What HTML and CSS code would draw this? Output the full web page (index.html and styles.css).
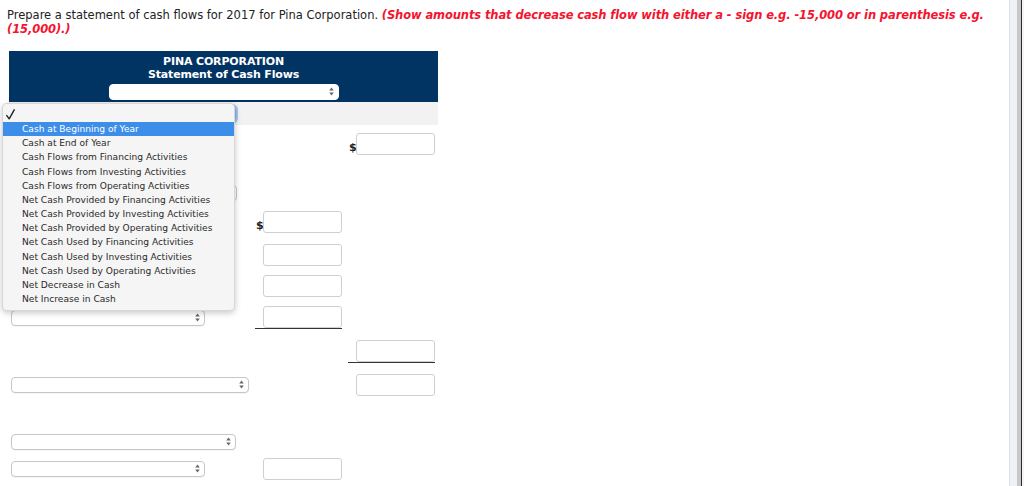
FILE: index.html
```html
<!DOCTYPE html>
<html>
<head>
<meta charset="utf-8">
<title>Pina Corporation</title>
<link rel="stylesheet" href="styles.css">
</head>
<body>
<div class="page">
  <p class="prompt">Prepare a statement of cash flows for 2017 for Pina Corporation. <em class="note">(Show amounts that decrease cash flow with either a - sign e.g. -15,000 or in parenthesis e.g.<br>(15,000).)</em></p>

  <div class="sheet">
    <div class="head">
      <div class="h-title">PINA CORPORATION</div>
      <div class="h-title">Statement of Cash Flows</div>
      <div class="sel sel-head"><span class="arr"><svg width="5" height="9" viewBox="0 0 5 9"><path d="M2.5 0.5L4.8 3.6H0.2Z M2.5 8.5L4.8 5.4H0.2Z" fill="#666"/></svg></span></div>
    </div>

    <div class="row grey">
      <div class="c1"><div class="sel w225 focus"></div></div>
    </div>

    <div class="row t8">
      <div class="c1"></div>
      <div class="c2"></div>
      <div class="c3"><div class="amt"><span class="dol">$</span><span class="inp"></span></div></div>
    </div>

    <div class="row t27">
      <div class="c1"><div class="sel w226"></div></div>
    </div>

    <div class="row t8b">
      <div class="c1"></div>
      <div class="c2"><div class="amt"><span class="dol">$</span><span class="inp"></span></div></div>
    </div>

    <div class="row t11">
      <div class="c1"></div>
      <div class="c2"><div class="amt"><span class="dol"></span><span class="inp"></span></div></div>
    </div>

    <div class="row t9">
      <div class="c1"></div>
      <div class="c2"><div class="amt"><span class="dol"></span><span class="inp"></span></div></div>
    </div>

    <div class="row t9">
      <div class="c1"><div class="sel w194"><span class="arr"><svg width="5" height="9" viewBox="0 0 5 9"><path d="M2.5 0.5L4.8 3.6H0.2Z M2.5 8.5L4.8 5.4H0.2Z" fill="#666"/></svg></span></div></div>
      <div class="c2"><div class="amt ul"><span class="dol"></span><span class="inp"></span></div></div>
    </div>

    <div class="row t11">
      <div class="c1"></div>
      <div class="c2"></div>
      <div class="c3"><div class="amt ul"><span class="dol"></span><span class="inp"></span></div></div>
    </div>

    <div class="row t11">
      <div class="c1"><div class="sel w238"><span class="arr"><svg width="5" height="9" viewBox="0 0 5 9"><path d="M2.5 0.5L4.8 3.6H0.2Z M2.5 8.5L4.8 5.4H0.2Z" fill="#666"/></svg></span></div></div>
      <div class="c2"></div>
      <div class="c3"><div class="amt"><span class="dol"></span><span class="inp"></span></div></div>
    </div>

    <div class="row t35">
      <div class="c1"><div class="sel w225"><span class="arr"><svg width="5" height="9" viewBox="0 0 5 9"><path d="M2.5 0.5L4.8 3.6H0.2Z M2.5 8.5L4.8 5.4H0.2Z" fill="#666"/></svg></span></div></div>
    </div>

    <div class="row t5">
      <div class="c1"><div class="sel w194"><span class="arr"><svg width="5" height="9" viewBox="0 0 5 9"><path d="M2.5 0.5L4.8 3.6H0.2Z M2.5 8.5L4.8 5.4H0.2Z" fill="#666"/></svg></span></div></div>
      <div class="c2"><div class="amt"><span class="dol"></span><span class="inp"></span></div></div>
    </div>

    <ul class="menu">
      <li class="item check"><svg class="tick" width="9" height="11" viewBox="0 0 9 11"><path d="M0.8 6.6L3.2 9.8L8.2 0.8" fill="none" stroke="#222" stroke-width="1.4" stroke-linecap="round" stroke-linejoin="round"/></svg></li>
      <li class="item active">Cash at Beginning of Year</li>
      <li class="item">Cash at End of Year</li>
      <li class="item">Cash Flows from Financing Activities</li>
      <li class="item">Cash Flows from Investing Activities</li>
      <li class="item">Cash Flows from Operating Activities</li>
      <li class="item">Net Cash Provided by Financing Activities</li>
      <li class="item">Net Cash Provided by Investing Activities</li>
      <li class="item">Net Cash Provided by Operating Activities</li>
      <li class="item">Net Cash Used by Financing Activities</li>
      <li class="item">Net Cash Used by Investing Activities</li>
      <li class="item">Net Cash Used by Operating Activities</li>
      <li class="item">Net Decrease in Cash</li>
      <li class="item">Net Increase in Cash</li>
    </ul>
  </div>
</div>
<div class="edge"></div>
</body>
</html>
```

FILE: styles.css
```css
* { box-sizing: border-box; }
html, body { margin: 0; padding: 0; background: #fff; }
body {
  width: 1024px;
  height: 486px;
  overflow: hidden;
  position: relative;
  font-family: "DejaVu Sans", Verdana, sans-serif;
  color: #222;
}
.page { padding: 8px 0 0 7px; }
.prompt {
  margin: 0;
  font-size: 11.5px;
  line-height: 14px;
  color: #222;
  white-space: nowrap;
}
.note { font-weight: bold; font-style: italic; color: #f3142f; letter-spacing: -0.1px; }

.sheet { position: relative; width: 429px; margin: 15px 0 0 2px; }

.head {
  background: #023463;
  color: #fff;
  text-align: center;
  padding: 4px 0 2px;
}
.h-title { font-weight: bold; font-size: 11px; line-height: 13px; letter-spacing: -0.15px; }

.sel {
  position: relative;
  height: 16px;
  background: #fff;
  border: 1px solid #c6c6c6;
  border-radius: 4px;
  box-shadow: 0 1px 1px rgba(0,0,0,0.04);
}
.sel-head { width: 230px; margin: 3px auto 0; border-color: #fff; }
.arr { position: absolute; right: 4px; top: 2px; display: flex; }
.arr svg { display: block; }
.w194 { width: 194px; }
.w225 { width: 225px; }
.w226 { width: 226px; }
.w238 { width: 238px; }
.focus { border-color: #7fb1ea; box-shadow: 0 0 0 2px rgba(110,165,235,0.6); }

.row {
  display: grid;
  grid-template-columns: 237px 99px 93px;
  align-items: center;
  min-height: 22px;
}
.grey { background: #f2f2f2; height: 23px; }
.c1 { padding-left: 2px; }
.c2, .c3 { display: flex; justify-content: flex-end; padding-right: 3px; }

.t5 { margin-top: 5px; }
.t8 { margin-top: 8px; }
.t8b { margin-top: 7px; }
.t9 { margin-top: 9px; }
.t11 { margin-top: 11px; }
.t27 { margin-top: 27px; }
.t35 { margin-top: 35px; }

.amt { display: flex; align-items: flex-end; width: 87px; }
.amt.ul { border-bottom: 1px solid #333; }
.dol {
  width: 8px;
  font-size: 11px;
  line-height: 12px;
  font-weight: bold;
  color: #222;
  padding-left: 1px;
  margin-bottom: 1px;
}
.inp {
  width: 79px;
  height: 22px;
  background: #fff;
  border: 1px solid #cfcfcf;
  border-radius: 3px;
}

.menu {
  position: absolute;
  left: -7px;
  top: 52px;
  width: 233px;
  margin: 0;
  padding: 4px 0;
  list-style: none;
  background: #f5f5f5;
  border: 1px solid rgba(0,0,0,0.12);
  border-radius: 5px;
  box-shadow: 0 2px 6px rgba(0,0,0,0.22);
  z-index: 5;
  font-family: "DejaVu Sans", Verdana, sans-serif;
  font-size: 9.1px;
  color: #2a2a2a;
}
.item { height: 14.17px; line-height: 14.17px; padding-left: 19px; white-space: nowrap; }
.item.active { background: #3d8ee8; color: #fff; }
.check { position: relative; }
.tick { position: absolute; left: 3px; top: 1px; display: block; }

.edge {
  position: absolute;
  top: 0;
  right: 0;
  bottom: 0;
  width: 15px;
  background: linear-gradient(to right,
    #d9e0e6 0, #d9e0e6 1px,
    #eef2f6 1px, #eef2f6 8px,
    #c7c7c7 8px, #c7c7c7 12px,
    #2a2a2a 12px, #2a2a2a 13px,
    #f4f4f4 13px, #f4f4f4 15px);
}
```
